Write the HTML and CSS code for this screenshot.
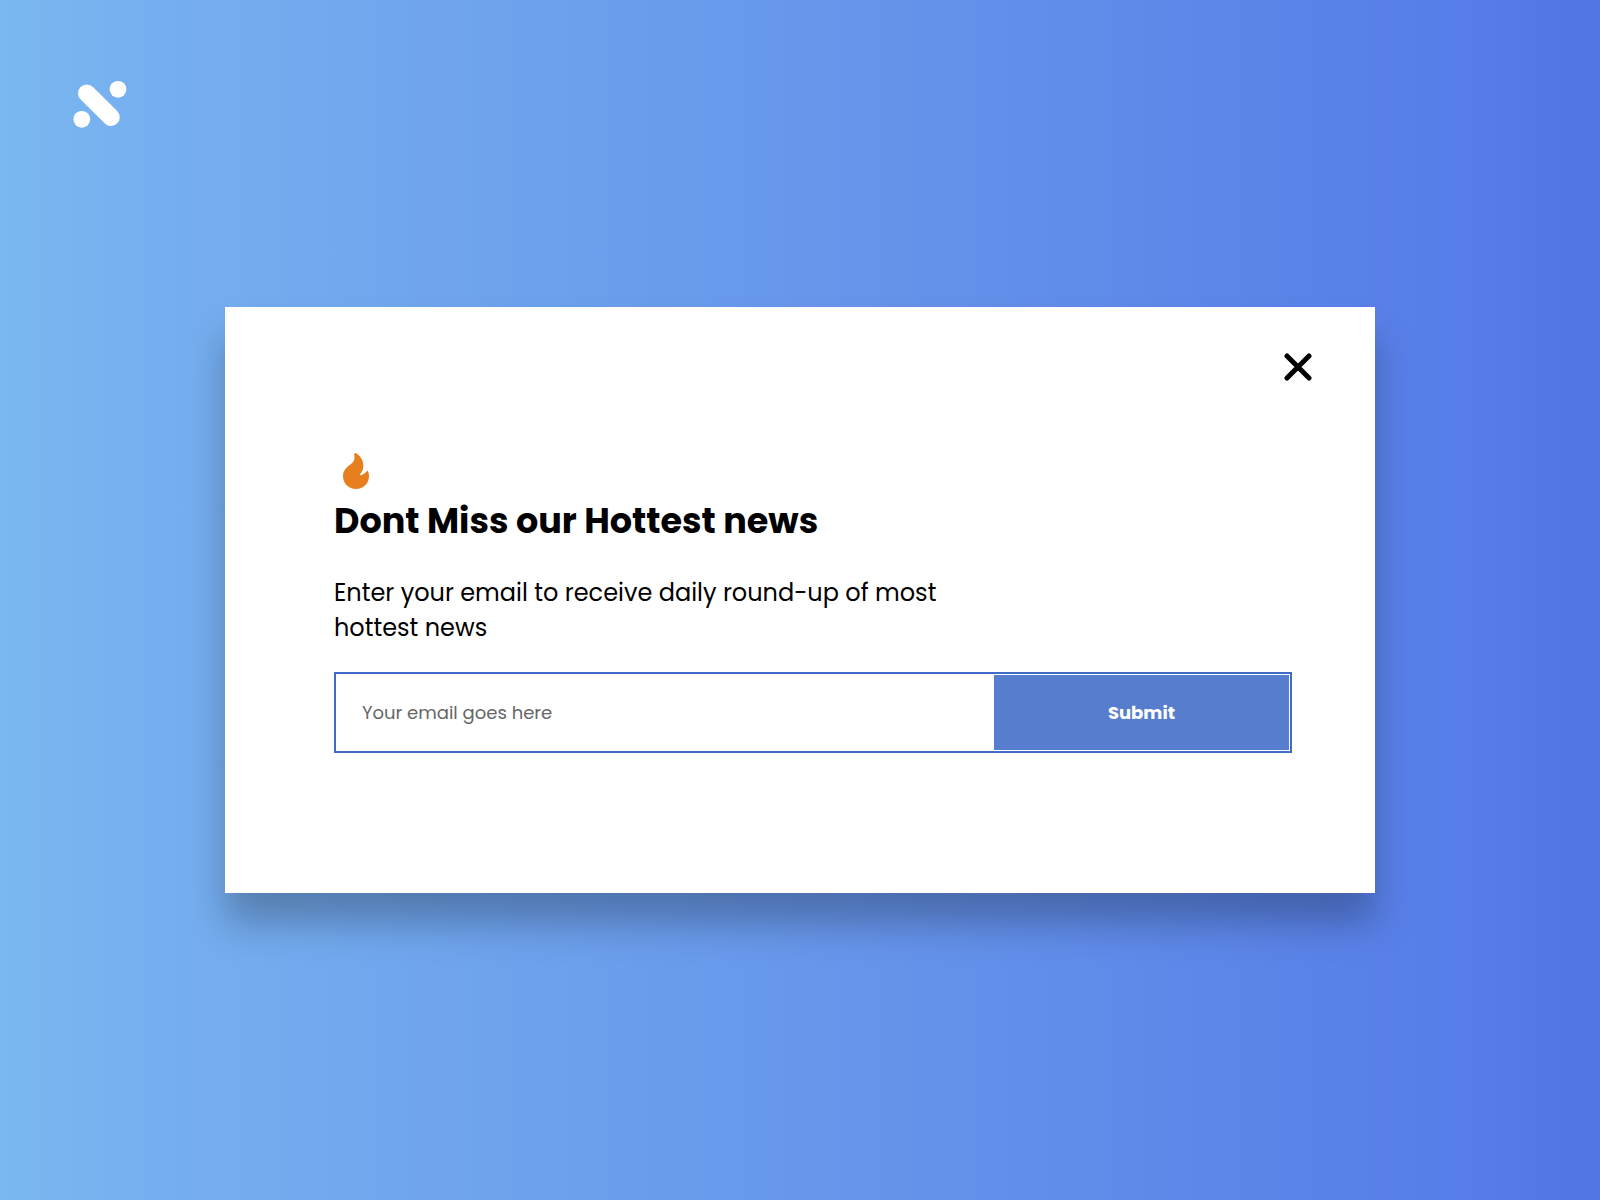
FILE: index.html
```html
<!DOCTYPE html>
<html lang="en">
<head>
<meta charset="utf-8">
<meta name="viewport" content="width=device-width, initial-scale=1">
<title>Newsletter</title>
<link rel="stylesheet" href="styles.css">
</head>
<body>
<header class="header">
  <svg class="logo" viewBox="0 0 54 48" role="img" aria-label="Logo">
    <circle cx="45" cy="9.300" r="8.400"/>
    <circle cx="8.800" cy="39.300" r="8.400"/>
    <path d="M13.800 13.200L38 37.200" stroke="#fff" stroke-width="17.500" stroke-linecap="round"/>
  </svg>
</header>
<main class="stage">
  <section class="card" aria-labelledby="card-title">
    <button class="close" type="button" aria-label="Close">
      <svg viewBox="0 0 28 28" aria-hidden="true"><path d="M3 3l22 22M25 3l-22 22"/></svg>
    </button>
    <div class="content">
      <svg class="flame" viewBox="0 0 26 36" aria-hidden="true">
        <path d="M11.300 .6C11.700 0 12.200 -.1 12.900 .2C17 2 20.400 7.500 20.400 12.500C20.400 16 19.300 18.500 17.100 21.300C16.500 22.200 17.500 22.500 18.600 22C21.200 21 23 19 24.500 17.400C25.500 19 26 21 26 23C26 30.500 20.500 36 13 36C5.500 36 0 30.500 0 23C0 18.500 2.500 15 6.500 12.200C10.500 9.300 11.700 7.500 11.400 3.500C11.300 2 11 1.200 11.300 .6Z"/>
      </svg>
      <h1 class="title" id="card-title">Dont Miss our Hottest news</h1>
      <p class="text">Enter your email to receive daily round-up of most hottest news</p>
      <form class="form">
        <input class="email" type="email" placeholder="Your email goes here" aria-label="Your email">
        <button class="submit" type="submit">Submit</button>
      </form>
    </div>
  </section>
</main>
</body>
</html>
```
FILE: styles.css
```css
* {
  box-sizing: border-box;
}

body {
  margin: 0;
  min-height: 100vh;
  display: grid;
  grid-template-rows: 1fr auto 1fr;
  background: linear-gradient(90deg, #7ab8ef 0%, #77b1f0 7%, #6898eb 48%, #567de8 92%, #5175e3 100%);
  color: #000;
  font-family: Poppins, Inter, sans-serif;
}

.header {
  padding: 80px 72px;
}

.logo {
  display: block;
  width: 56px;
  height: 48px;
  fill: #fff;
}

.stage {
  display: flex;
  justify-content: center;
}

.card {
  display: flex;
  flex-direction: column;
  width: 72%;
  max-width: 1150px;
  padding: 46px 63px 140px 109px;
  background: #fff;
  box-shadow: 0 30px 36px rgba(0, 0, 0, 0.26);
}

.close {
  align-self: flex-end;
  width: 28px;
  height: 28px;
  padding: 0;
  border: 0;
  background: none;
  cursor: pointer;
}

.close svg {
  display: block;
  fill: none;
  stroke: #000;
  stroke-width: 5;
  stroke-linecap: round;
}

.content {
  padding: 72px 20px 0 0;
}

.flame {
  display: block;
  width: 26px;
  height: 36px;
  margin-left: 9px;
  fill: #e87f1e;
}

.title {
  margin: 8px 0 30px;
  font-size: 35px;
  line-height: 48px;
  font-weight: 700;
}

.text {
  max-width: 640px;
  margin: 0 0 27px;
  font-size: 24px;
  line-height: 35px;
}

.form {
  display: flex;
  min-height: 81px;
  padding: 1px;
  border: 2px solid #3f6bc9;
}

.email {
  flex: 1;
  min-width: 0;
  padding: 0 25px;
  border: 0;
  background: none;
  color: #000;
  font: 400 18px Poppins, Inter, sans-serif;
}

.email::placeholder {
  color: #666;
}

.submit {
  width: 31%;
  border: 0;
  background: #577dce;
  color: #fff;
  font: 700 18px Poppins, Inter, sans-serif;
  cursor: pointer;
}
```
